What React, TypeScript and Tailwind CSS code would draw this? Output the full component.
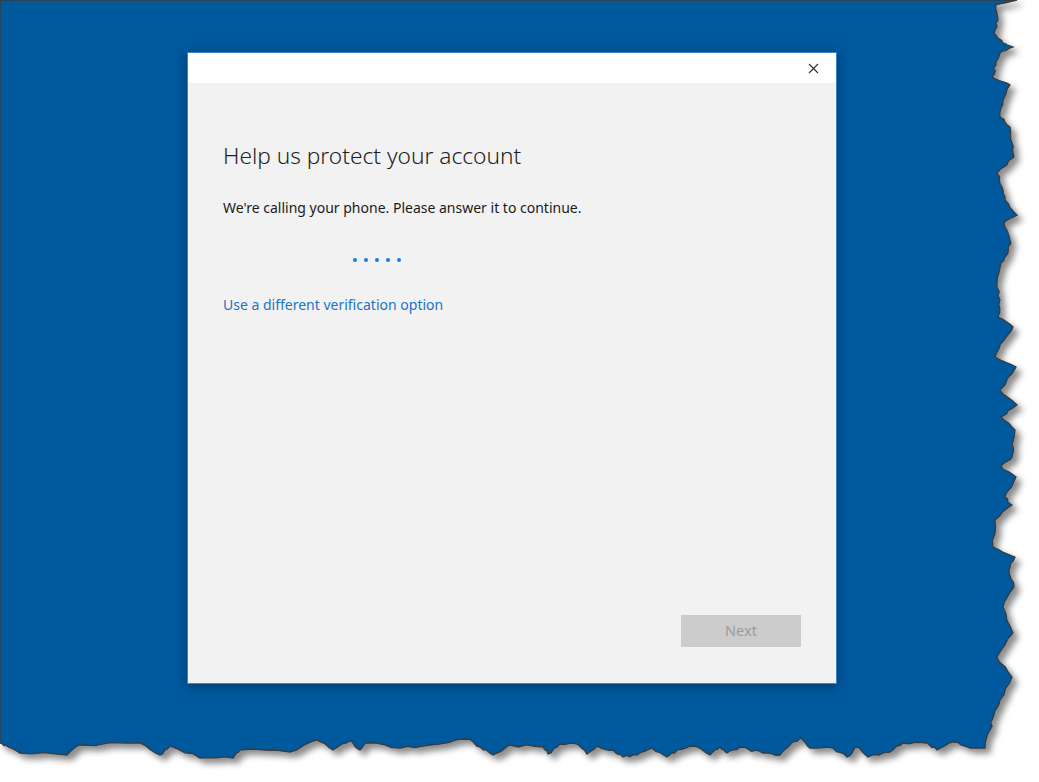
import React from 'react';

// torn paper outline: right edge top-to-bottom, then bottom edge right-to-left
const rightEdge: [number, number][] = [
  [1017, 0], [996, 5], [998, 20], [994, 33], [1003, 43], [1013, 47], [1000, 53], [996, 65],
  [992, 77], [1010, 85], [1003, 100], [1000, 117], [1010, 127], [1012, 143], [1014, 157],
  [997, 173], [1002, 187], [1005, 200], [1017, 215], [1004, 223], [1010, 240], [1008, 253],
  [1001, 263], [997, 283], [1000, 300], [998, 317], [1013, 327], [1004, 340], [995, 357],
  [1016, 367], [1000, 390], [1017, 405], [1001, 417], [1015, 430], [1012, 457], [1001, 467],
  [1016, 477], [1005, 497], [1012, 505], [995, 520], [993, 547], [1015, 557], [1009, 570],
  [1014, 587], [1003, 607], [1013, 633], [997, 657], [1012, 677], [1000, 700], [994, 715],
  [990, 730], [985, 748],
];

const bottomEdge: [number, number][] = [
  [970, 748], [953, 742], [937, 750], [927, 743], [903, 743], [890, 752], [868, 757],
  [857, 747], [847, 757], [833, 748], [810, 748], [800, 738], [790, 745], [780, 755],
  [763, 753], [740, 747], [727, 753], [720, 747], [710, 755], [693, 746], [677, 750],
  [667, 757], [652, 748], [637, 755], [623, 757], [613, 750], [597, 746], [587, 754],
  [577, 744], [560, 744], [548, 754], [543, 747], [510, 745], [493, 755], [480, 747],
  [467, 739], [430, 745], [400, 748], [367, 743], [360, 750], [350, 741], [333, 750],
  [317, 740], [290, 752], [240, 750], [233, 758], [200, 758], [170, 746], [160, 755],
  [140, 743], [80, 745], [67, 755], [20, 753], [5, 745], [0, 743],
];

// small deterministic jitter so the edge looks ripped, not polygonal
function roughen(pts: [number, number][], horizontal: boolean) {
  const out: [number, number][] = [];
  let seed = 7;
  const rnd = () => {
    seed = (seed * 9301 + 49297) % 233280;
    return seed / 233280 - 0.5;
  };
  for (let i = 0; i < pts.length - 1; i++) {
    const [x1, y1] = pts[i];
    const [x2, y2] = pts[i + 1];
    out.push(pts[i]);
    for (let k = 1; k < 4; k++) {
      const t = k / 4;
      const j = rnd() * 3;
      out.push(horizontal ? [x1 + (x2 - x1) * t, y1 + (y2 - y1) * t + j] : [x1 + (x2 - x1) * t + j, y1 + (y2 - y1) * t]);
    }
  }
  out.push(pts[pts.length - 1]);
  return out;
}

const outline = [[0, 0] as [number, number], ...roughen(rightEdge, false), ...roughen(bottomEdge, true)]
  .map(([x, y]) => `${x.toFixed(1)},${y.toFixed(1)}`)
  .join(' ');

function TornBackdrop() {
  return (
    <svg className="absolute inset-0" width="1039" height="782" viewBox="0 0 1039 782">
      <defs>
        <filter id="paperShadow" x="-5%" y="-5%" width="115%" height="115%">
          <feDropShadow dx="5" dy="5" stdDeviation="3" floodColor="#000" floodOpacity="0.45" />
        </filter>
      </defs>
      <polygon points={outline} fill="#00599d" stroke="#3a3a3a" strokeWidth="1.3" filter="url(#paperShadow)" />
    </svg>
  );
}

export default function App() {
  return (
    <div className="relative w-[1039px] h-[782px] overflow-hidden bg-white" style={{ fontFamily: '"Noto Sans", "Open Sans", sans-serif' }}>
      <TornBackdrop />
      <div className="relative pt-[52px] pl-[187px]">
        <div className="w-[650px] h-[632px] flex flex-col border border-[#3d86c9] bg-[#f2f2f2] shadow-[0_2px_10px_rgba(0,0,0,0.35)]">
          <div className="h-[30px] bg-white flex justify-end items-center pr-[17px]">
            <svg width="11" height="11" viewBox="0 0 11 11">
              <path d="M1 1 L10 10 M10 1 L1 10" stroke="#333" strokeWidth="1.2" />
            </svg>
          </div>
          <div className="flex-1 flex flex-col pl-[35px] pr-[35px] pt-[58px] pb-[36px]">
            <h1 className="text-[22.7px] leading-[30px] font-light text-[#1f1f1f]">Help us protect your account</h1>
            <p className="mt-[27px] text-[14px] leading-[20px] text-[#1a1a1a]">
              We&apos;re calling your phone. Please answer it to continue.
            </p>
            <div className="mt-[40px] ml-[130px] flex gap-[7px] h-[4px]">
              <span className="w-[4px] h-[4px] rounded-full bg-[#1a7fe0]" />
              <span className="w-[4px] h-[4px] rounded-full bg-[#1a7fe0]" />
              <span className="w-[4px] h-[4px] rounded-full bg-[#1a7fe0]" />
              <span className="w-[4px] h-[4px] rounded-full bg-[#1a7fe0]" />
              <span className="w-[4px] h-[4px] rounded-full bg-[#1a7fe0]" />
            </div>
            <a className="mt-[33px] text-[14px] leading-[20px] text-[#1a73c9] self-start">
              Use a different verification option
            </a>
            <div className="flex-1" />
            <div className="flex justify-end">
              <button className="w-[120px] h-[32px] bg-[#cccccc] text-[#9b9b9b] text-[14.5px]">Next</button>
            </div>
          </div>
        </div>
      </div>
    </div>
  );
}
